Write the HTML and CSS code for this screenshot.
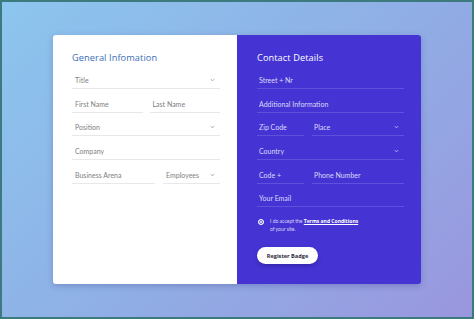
FILE: index.html
```html
<!DOCTYPE html>
<html lang="en">
<head>
    <meta charset="UTF-8">
    <meta name="viewport" content="width=device-width, initial-scale=1.0">
    <title>Register Badge</title>
    <link rel="stylesheet" href="styles.css">
</head>
<body>

<div class="card">
    <div class="panel general">
        <h2>General Infomation</h2>

        <div class="field select">Title <svg class="chev" viewBox="0 0 6 4"><path d="M1 1 L3 3 L5 1"/></svg></div>

        <div class="row half">
            <div class="field">First Name</div>
            <div class="field">Last Name</div>
        </div>

        <div class="field select">Position <svg class="chev" viewBox="0 0 6 4"><path d="M1 1 L3 3 L5 1"/></svg></div>

        <div class="field">Company</div>

        <div class="row arena">
            <div class="field">Business Arena</div>
            <div class="field select">Employees <svg class="chev" viewBox="0 0 6 4"><path d="M1 1 L3 3 L5 1"/></svg></div>
        </div>
    </div>

    <div class="panel contact">
        <h2>Contact Details</h2>

        <div class="field">Street + Nr</div>

        <div class="field">Additional Information</div>

        <div class="row small-first">
            <div class="field">Zip Code</div>
            <div class="field select">Place <svg class="chev" viewBox="0 0 6 4"><path d="M1 1 L3 3 L5 1"/></svg></div>
        </div>

        <div class="field select">Country <svg class="chev" viewBox="0 0 6 4"><path d="M1 1 L3 3 L5 1"/></svg></div>

        <div class="row small-first">
            <div class="field">Code +</div>
            <div class="field">Phone Number</div>
        </div>

        <div class="field">Your Email</div>

        <div class="terms">
            <span class="radio"></span>
            <p>I do accept the <a href="#">Terms and Conditions</a><br>of your site.</p>
        </div>

        <button>Register Badge</button>
    </div>
</div>

</body>
</html>
```

FILE: styles.css
```css
* { box-sizing: border-box; }
html, body { margin: 0; height: 100%; }
body { border: 2px solid #3c7a7d; background: linear-gradient(135deg, #8cc6ee 0%, #8fb0e6 50%, #9a96de 100%); display: flex; align-items: center; justify-content: center; font-family: Lato, "Open Sans", sans-serif; }

.card { display: flex; width: 368px; height: 249px; border-radius: 3px; overflow: hidden; box-shadow: 0 2px 6px rgba(40, 40, 110, 0.25); }
.panel { width: 184px; padding: 16px 17px 0 19px; display: flex; flex-direction: column; gap: 6.6px; }
.general { background: #fff; }
.contact { background: #4534d3; padding-left: 20px; }

h2 { margin: 0 0 0.6px; font-family: "Open Sans", sans-serif; font-weight: 500; font-size: 9.2px; line-height: 14px; letter-spacing: 0.1px; }
.general h2 { color: #3a6db5; }
.contact h2 { color: #fff; }

.field { height: 17px; padding: 0 3px 0 3px; font-size: 7px; line-height: 16px; display: flex; align-items: center; justify-content: space-between; }
.general .field { color: #808080; border-bottom: 1px solid #e8e8ea; }
.contact .field { color: #ddd9fa; border-bottom: 1px solid #5f51dc; padding-left: 2px; }

.chev { width: 5px; height: 4px; fill: none; stroke-width: 0.9; margin-right: 2px; }
.general .chev { stroke: #888; }
.contact .chev { stroke: #e0ddff; }

.row { display: flex; gap: 7px; }
.row .field { flex: 1; }
.arena { gap: 8px; }
.arena .field:first-child { flex: 0 0 83px; }
.small-first { gap: 8px; }
.small-first .field:first-child { flex: 0 0 47px; }

.terms { display: flex; align-items: flex-start; gap: 6px; margin-top: 3px; padding-left: 1px; }
.radio { width: 6px; height: 6px; margin-top: 2px; border-radius: 50%; background: #fff; border: 1.5px solid #fff; box-shadow: inset 0 0 0 1px #4534d3; }
.terms p { margin: 0; font-size: 5px; line-height: 8px; color: #dcd8fa; }
.terms a { color: #fff; font-weight: bold; font-family: "Open Sans", sans-serif; }

button { margin-top: 8px; width: 61px; height: 17px; border: none; border-radius: 9px; background: #fff; color: #2a2a3a; font-family: "Open Sans", sans-serif; font-weight: bold; font-size: 5.6px; padding: 0; box-shadow: 0 2px 4px rgba(20, 10, 80, 0.3); cursor: pointer; }
```
